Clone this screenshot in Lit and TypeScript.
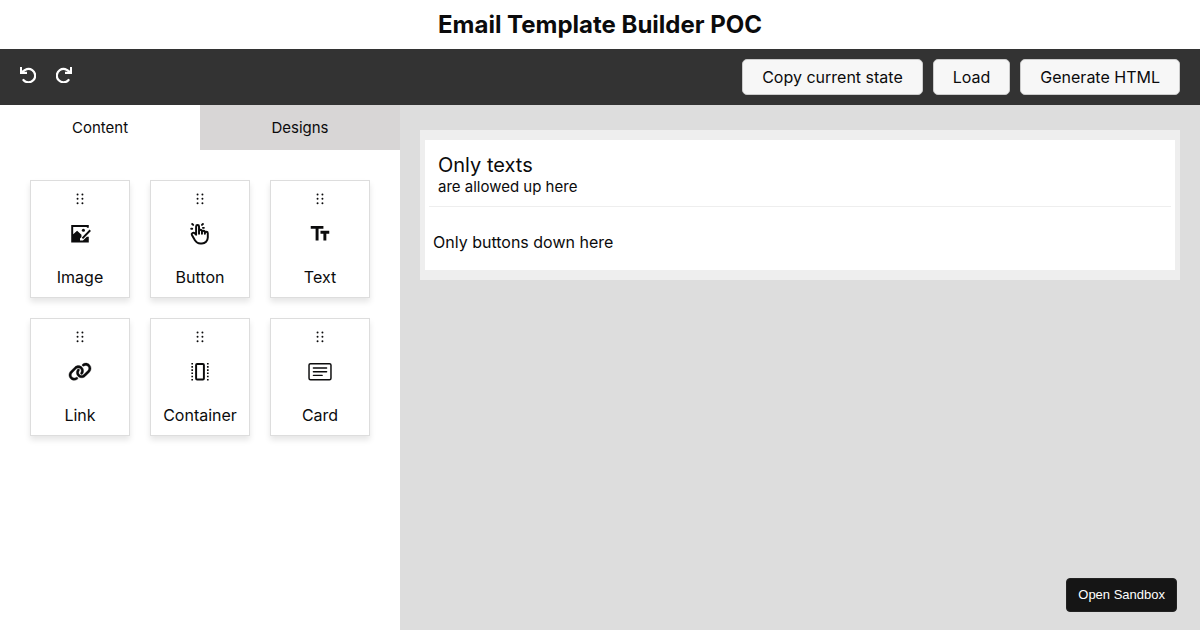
import { LitElement, html, css, svg } from "lit";
import { customElement, property, state } from "lit/decorators.js";

const icons: Record<string, unknown> = {
  undo: svg`<path d="M2.500 5.500A6.700 6.700 0 1 1 3.400 13" fill="none" stroke="currentColor" stroke-width="2.200" stroke-linecap="round"/><path d="M0 0h2v3l2 1.800h3V7H0z"/>`,
  redo: svg`<path d="M13.500 5.500A6.700 6.700 0 1 0 12.600 13" fill="none" stroke="currentColor" stroke-width="2.200" stroke-linecap="round"/><path d="M16 0h-2v3l-2 1.800H9V7h7z"/>`,
  image: svg`<path d="M3 3h18v3h-2V5H5v7.500L9 9l4.500 4v2.500L12 17v2h3l4-4h2v6H3z"/><circle cx="15.500" cy="8.500" r="1.600"/><path d="m14.500 16.800 8-8.300" stroke="currentColor" stroke-width="2" fill="none"/>`,
  button: svg`<path fill="none" stroke="currentColor" stroke-width="2" stroke-linecap="round" stroke-linejoin="round" d="M8 13V4.500a1.500 1.500 0 0 1 3 0V12M11 11.500v-2a1.500 1.500 0 0 1 3 0V12M14 10.500a1.500 1.500 0 0 1 3 0V12M17 11.500a1.500 1.500 0 0 1 3 0V16a6 6 0 0 1-6 6h-2 .208a6 6 0 0 1-5.012-2.700L7 19q-.468-.718-3.286-5.728a1.500 1.500 0 0 1 .536-2.022 1.867 1.867 0 0 1 2.280.280L8 13M5 3 4 2M4 7H3M14 3l1-1M15 6h1"/>`,
  text: svg`<path d="M2.500 4v3h5v12h3V7h5V4zm19 5h-9v3h3v7h3v-7h3z"/>`,
  link: svg`<path stroke="currentColor" stroke-width="10" transform="translate(0 2.400) scale(.0375)" d="M579.8 267.7c56.5-56.5 56.5-148 0-204.5c-50-50-128.8-56.5-186.3-15.4l-1.6 1.1c-14.4 10.3-17.7 30.3-7.4 44.6s30.3 17.7 44.6 7.4l1.6-1.1c32.1-22.9 76-19.3 103.8 8.6c31.500 31.500 31.500 82.500 0 114L422.300 334.800c-31.500 31.500-82.500 31.500-114 0c-27.900-27.900-31.500-71.800-8.600-103.800l1.100-1.600c10.300-14.400 6.900-34.400-7.400-44.600s-34.400-6.900-44.600 7.400l-1.100 1.600C206.500 251.200 213 330 263 380c56.500 56.500 148 56.500 204.500 0zM60.200 244.300c-56.500 56.500-56.500 148 0 204.500c50 50 128.800 56.500 186.300 15.400l1.600-1.100c14.400-10.300 17.700-30.300 7.400-44.600s-30.300-17.700-44.600-7.400l-1.600 1.100c-32.100 22.900-76 19.300-103.800-8.600C74 372 74 321 105.500 289.500L217.700 177.200c31.500-31.500 82.500-31.500 114 0c27.900 27.900 31.500 71.800 8.600 103.900l-1.100 1.600c-10.300 14.400-6.900 34.400 7.400 44.600s34.400 6.900 44.600-7.400l1.100-1.600C433.500 260.800 427 182 377 132c-56.500-56.500-148-56.500-204.500 0z"/>`,
  container: svg`<rect x="8" y="4" width="8" height="16" rx="1" fill="none" stroke="currentColor" stroke-width="2"/><path d="M4 3v18M20 3v18" stroke="currentColor" stroke-width="1.700" stroke-dasharray="1.600 1.680"/>`,
  card: svg`<g transform="scale(1.500)"><path d="M14.500 3a.5.5 0 0 1 .5.5v9a.5.5 0 0 1-.5.5h-13a.5.5 0 0 1-.5-.5v-9a.5.5 0 0 1 .5-.5zm-13-1A1.500 1.500 0 0 0 0 3.500v9A1.500 1.500 0 0 0 1.500 14h13a1.500 1.500 0 0 0 1.500-1.500v-9A1.500 1.500 0 0 0 14.500 2z"/><path d="M3 5.500a.5.5 0 0 1 .5-.5h9a.5.5 0 0 1 0 1h-9a.5.5 0 0 1-.5-.5M3 8a.5.5 0 0 1 .5-.5h9a.5.5 0 0 1 0 1h-9A.5.5 0 0 1 3 8m0 2.500a.5.5 0 0 1 .5-.5h6a.5.5 0 0 1 0 1h-6a.5.5 0 0 1-.5-.5"/></g>`,
};

@customElement("block-tile")
export class BlockTile extends LitElement {
  @property() icon = "";
  @property() label = "";

  static styles = css`
    :host {
      display: flex;
      flex-direction: column;
      align-items: center;
      box-sizing: border-box;
      height: 118px;
      padding: 10px 0 8px;
      background: #fff;
      border: 1px solid #ddd;
      box-shadow: 0 4px 6px rgba(0, 0, 0, 0.1);
      cursor: grab;
    }
    svg { display: block; fill: currentColor; }
    .icon { margin: 15px 0 20px; }
    .label { font-size: 16px; line-height: 24px; }
  `;

  render() {
    return html`
      <svg class="grip" width="16" height="16" viewBox="0 0 16 16" aria-hidden="true">
        ${[3.5, 8, 12.5].map((y) => [5.5, 10.5].map((x) => svg`<circle cx=${x} cy=${y} r="1"/>`))}
      </svg>
      <svg class="icon" width="24" height="24" viewBox="0 0 24 24" aria-hidden="true">${icons[this.icon]}</svg>
      <span class="label">${this.label}</span>
    `;
  }
}

@customElement("app-root")
export class AppRoot extends LitElement {
  @state() tab = "Content";

  static styles = css`
    :host {
      display: flex;
      flex-direction: column;
      min-height: 100vh;
      font-family: Inter, sans-serif;
      color: #0b0b0c;
      background: #fff;
    }
    button { font: inherit; color: inherit; cursor: pointer; }
    h1, h2, p { margin: 0; font-weight: 400; }
    .title {
      padding: 9px 0 8px;
      font-size: 24px;
      line-height: 32px;
      font-weight: 700;
      text-align: center;
    }
    .toolbar {
      display: flex;
      align-items: center;
      justify-content: space-between;
      padding: 10px 20px;
      background: #333;
    }
    .history { display: flex; gap: 20px; padding-bottom: 4px; }
    .history button { padding: 0; border: 0; background: none; color: #fff; }
    .history svg { display: block; fill: currentColor; }
    .actions { display: flex; gap: 10px; }
    .actions button {
      box-sizing: border-box;
      height: 36px;
      padding: 0 19px;
      font-size: 16px;
      line-height: 24px;
      background: #f7f7f7;
      border: 1px solid #ccc;
      border-radius: 5px;
    }
    .main { display: grid; grid-template-columns: 1fr 2fr; flex: 1; }
    .tabs { display: grid; grid-template-columns: 1fr 1fr; }
    .tabs button {
      height: 45px;
      padding: 0;
      font-size: 15px;
      border: 0;
      background: #d8d6d6;
    }
    .tabs button[aria-selected="true"] { background: #fff; }
    .blocks { display: grid; grid-template-columns: repeat(3, 1fr); gap: 20px; padding: 30px; }
    .canvas { padding: 25px 20px; background: #ddd; }
    .frame { padding: 10px 5px; background: #eee; }
    .sheet { padding: 0 4px; background: #fff; }
    .texts { padding: 12px 9px 10px; border-bottom: 1px solid #eee; }
    .texts h2 { font-size: 20px; line-height: 26px; }
    .texts p { font-size: 15px; line-height: 18px; }
    .buttons { padding: 23px 4px 16px; font-size: 16px; line-height: 24px; }
    .sandbox {
      position: fixed;
      right: 23px;
      bottom: 18px;
      box-sizing: border-box;
      height: 34px;
      padding: 0 11px 2px;
      font-family: "Liberation Sans", Arial, sans-serif;
      font-size: 13px;
      color: #fff;
      background: #151515;
      border: 1px solid #222;
      border-radius: 4px;
    }
  `;

  private blocks = ["Image", "Button", "Text", "Link", "Container", "Card"];

  render() {
    return html`
      <h1 class="title">Email Template Builder POC</h1>
      <header class="toolbar">
        <div class="history">
          ${["undo", "redo"].map((name) => html`
            <button aria-label=${name}><svg width="16" height="16" viewBox="0 0 16 16">${icons[name]}</svg></button>`)}
        </div>
        <div class="actions">
          <button>Copy current state</button>
          <button>Load</button>
          <button>Generate HTML</button>
        </div>
      </header>
      <div class="main">
        <aside>
          <div class="tabs" role="tablist">
            ${["Content", "Designs"].map((t) => html`
              <button role="tab" aria-selected=${this.tab === t} @click=${() => (this.tab = t)}>${t}</button>`)}
          </div>
          <div class="blocks">
            ${this.blocks.map((b) => html`<block-tile icon=${b.toLowerCase()} label=${b}></block-tile>`)}
          </div>
        </aside>
        <main class="canvas">
          <div class="frame">
            <div class="sheet">
              <div class="texts">
                <h2>Only texts</h2>
                <p>are allowed up here</p>
              </div>
              <p class="buttons">Only buttons down here</p>
            </div>
          </div>
        </main>
      </div>
      <button class="sandbox">Open Sandbox</button>
    `;
  }
}
